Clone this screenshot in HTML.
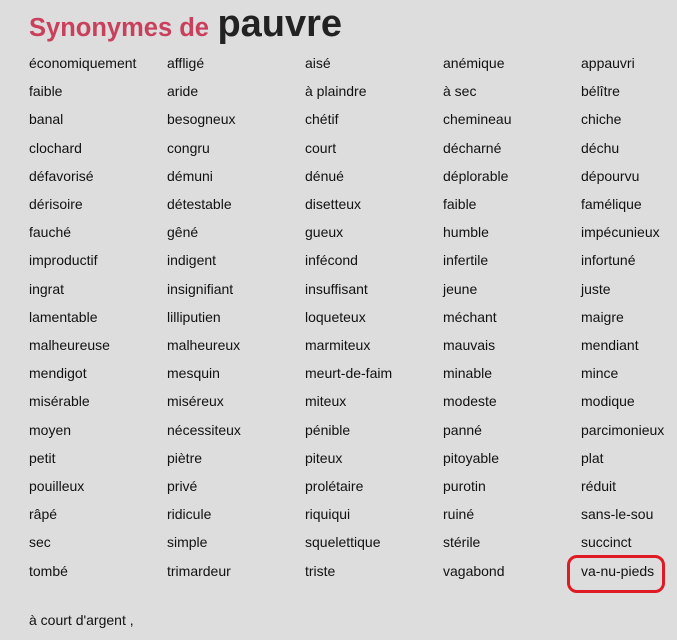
<!DOCTYPE html>
<html><head><meta charset="utf-8"><style>
body{margin:0;width:677px;height:640px;background:#dddddd;font-family:"Liberation Sans",Arial,sans-serif;color:#111;position:relative;overflow:hidden}
.t{position:absolute;left:29px;top:3px;white-space:nowrap}
.t .a{color:#c9405c;font-weight:bold;font-size:25.5px}
.t .b{color:#222;font-weight:bold;font-size:38px;margin-left:4px}
.w{position:absolute;font-size:14px;line-height:20px;white-space:nowrap}
.ring{position:absolute;left:567px;top:555px;width:92px;height:32px;border:3px solid #e01a24;border-radius:10px}
</style></head><body>
<div class="t"><span class="a">Synonymes de</span> <span class="b">pauvre</span></div>
<div id="g"></div>
<div class="ring"></div>
<div class="w" style="left:29px;top:610px">à court d'argent ,</div>
<script>
var w=["économiquement","affligé","aisé","anémique","appauvri","faible","aride","à plaindre","à sec","bélître","banal","besogneux","chétif","chemineau","chiche","clochard","congru","court","décharné","déchu","défavorisé","démuni","dénué","déplorable","dépourvu","dérisoire","détestable","disetteux","faible","famélique","fauché","gêné","gueux","humble","impécunieux","improductif","indigent","infécond","infertile","infortuné","ingrat","insignifiant","insuffisant","jeune","juste","lamentable","lilliputien","loqueteux","méchant","maigre","malheureuse","malheureux","marmiteux","mauvais","mendiant","mendigot","mesquin","meurt-de-faim","minable","mince","misérable","miséreux","miteux","modeste","modique","moyen","nécessiteux","pénible","panné","parcimonieux","petit","piètre","piteux","pitoyable","plat","pouilleux","privé","prolétaire","purotin","réduit","râpé","ridicule","riquiqui","ruiné","sans-le-sou","sec","simple","squelettique","stérile","succinct","tombé","trimardeur","triste","vagabond","va-nu-pieds"];
var h="";for(var i=0;i<w.length;i++){var r=Math.floor(i/5),c=i%5;h+='<div class="w" style="left:'+(29+c*138)+'px;top:'+(53+r*28.2).toFixed(1)+'px">'+w[i]+'</div>';}
document.getElementById("g").innerHTML=h;
</script>
</body></html>
